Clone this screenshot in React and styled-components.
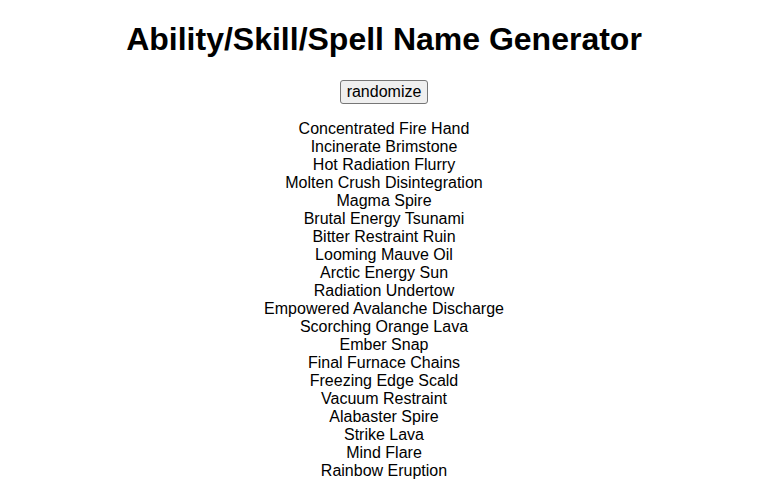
import styled, { createGlobalStyle } from "styled-components";

const names = [
    "Concentrated Fire Hand",
    "Incinerate Brimstone",
    "Hot Radiation Flurry",
    "Molten Crush Disintegration",
    "Magma Spire",
    "Brutal Energy Tsunami",
    "Bitter Restraint Ruin",
    "Looming Mauve Oil",
    "Arctic Energy Sun",
    "Radiation Undertow",
    "Empowered Avalanche Discharge",
    "Scorching Orange Lava",
    "Ember Snap",
    "Final Furnace Chains",
    "Freezing Edge Scald",
    "Vacuum Restraint",
    "Alabaster Spire",
    "Strike Lava",
    "Mind Flare",
    "Rainbow Eruption",
];

const GlobalStyle = createGlobalStyle`
    body {
        margin: 0;
        background: #ffffff;
        color: #000000;
        font-family: "Liberation Sans", Arial, sans-serif;
    }
`;

const App = () => {
    return (
        <Page>
            <GlobalStyle/>
            <Title>Ability/Skill/Spell Name Generator</Title>
            <RandomizeButton>randomize</RandomizeButton>
            <NameList>
                {names.map((name) => (
                    <NameItem key={name}>{name}</NameItem>
                ))}
            </NameList>
        </Page>
    );
};

export default App;

const Page = styled.div`
    display: flex;
    flex-flow: column;
    align-items: center;
    text-align: center;
`;

const Title = styled.h1`
    font-size: 32px;
    font-weight: bold;
    margin: 21.44px 0;
    line-height: 37px;
`;

const RandomizeButton = styled.button`
    font-family: "Liberation Sans", Arial, sans-serif;
    font-size: 16px;
    line-height: 18px;
    padding: 2px 6px;
    color: #000000;
    background: #efefef;
    border: 1px solid #767676;
    border-radius: 3px;
    cursor: pointer;
`;

const NameList = styled.div`
    display: flex;
    flex-flow: column;
    align-items: center;
    margin-top: 16px;
`;

const NameItem = styled.div`
    font-size: 16px;
    line-height: 18px;
`;
